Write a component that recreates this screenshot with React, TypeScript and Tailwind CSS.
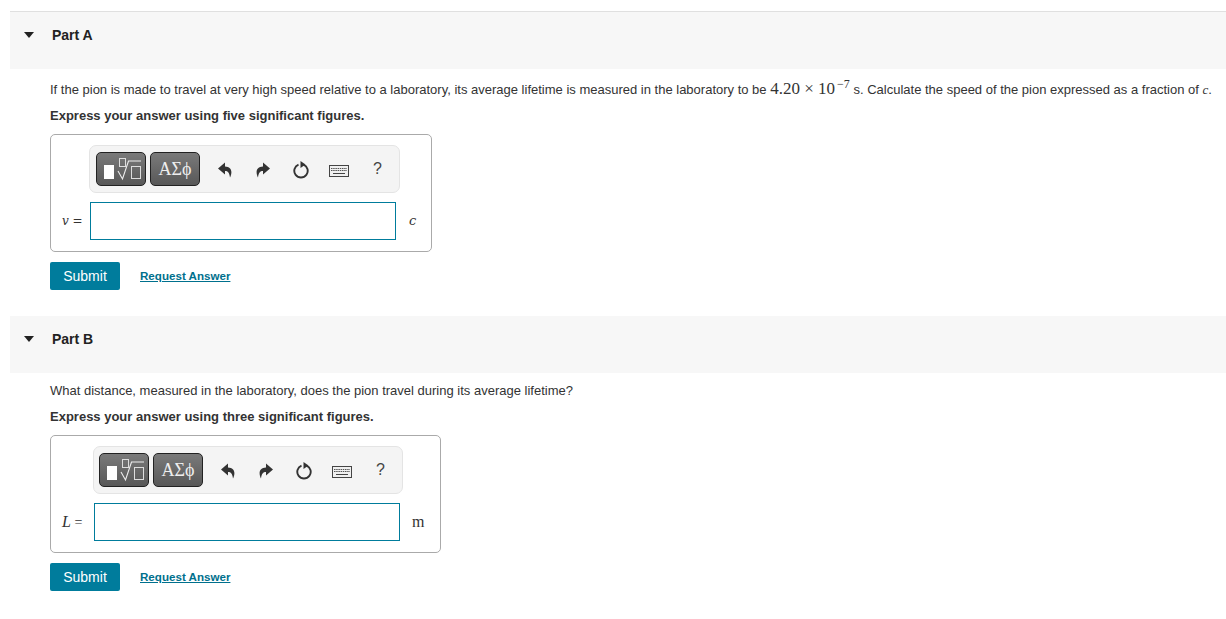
import type { ReactNode } from "react";

const serif = "font-['Liberation_Serif','DejaVu_Serif',serif]";
const btn = "h-[34px] w-[50px] flex items-center justify-center rounded-[5px] border border-[#222] bg-gradient-to-b from-[#7a7a7a] to-[#585858]";

function TemplateIcon() {
    return (
        <svg width="48" height="32" viewBox="0 0 48 32" fill="none">
            <rect x="7" y="12" width="10" height="14" fill="#fff" />
            <rect x="22.500" y="5.500" width="6" height="8" stroke="#ddd" />
            <path d="M21 18l4.500 8L31.500 8H44" stroke="#eee" strokeWidth="1.1" />
            <rect x="34.500" y="13.500" width="9" height="12" stroke="#ddd" />
        </svg>
    );
}

function ToolbarIcons() {
    return (
        <>
            {/* undo */}
            <svg width="14" height="16" viewBox="0 0 14 16" className="ml-[18px] mt-[1px]">
                <path d="M7 0.500L0 6.500 7 12.500V9c3 0 4.300 1.500 5 6.500 2.800-6 1.500-10.500-5-11z" fill="#333" />
            </svg>
            {/* redo */}
            <svg width="14" height="16" viewBox="0 0 14 16" className="ml-[24px] mt-[1px]">
                <path d="M7 0.500l7 6-7 6V9c-3 0-4.300 1.500-5 6.500C-0.800 9.500 0.500 5 7 4.500z" fill="#333" />
            </svg>
            {/* reset */}
            <svg width="16" height="18" viewBox="0 0 16 18" fill="none" className="ml-[23px] mt-[1px]">
                <path d="M10.500 3.600a6.700 6.700 0 1 1-5 0" stroke="#333" strokeWidth="1.900" />
                <path d="M7.500 0l5 3.600-5 3.400z" fill="#333" />
            </svg>
            {/* keyboard */}
            <svg width="20" height="12" viewBox="0 0 20 12" fill="none" className="ml-[20px] mt-[3px]">
                <rect x="0.500" y="0.500" width="19" height="11" fill="#f0f0f0" stroke="#444" />
                <path d="M2 3.500h16M2 5.500h16" stroke="#555" strokeDasharray="1.500 0.700" />
                <path d="M4 8.500h12" stroke="#444" />
            </svg>
            <span className="ml-[24px] text-[16px] leading-none text-[#444]">?</span>
        </>
    );
}

function AnswerBox({ label, unit, boxClass, toolbarClass }: { label: ReactNode; unit: ReactNode; boxClass: string; toolbarClass: string }) {
    return (
        <div className={`${boxClass} h-[118px] border border-[#aaa] rounded-[5px] bg-white pt-[10px]`}>
            <div className={`${toolbarClass} h-[48px] flex items-center bg-[#f4f4f4] border border-[#e4e4e4] rounded-[7px]`}>
                <div className={btn}>
                    <TemplateIcon />
                </div>
                <div className={`${serif} ${btn} ml-[4px] text-[#eee] text-[18px]`}>ΑΣϕ</div>
                <ToolbarIcons />
            </div>
            <div className="flex items-center mt-[9px]">
                {label}
                <div className="w-[306px] h-[38px] border border-[#007c9c] bg-white" />
                {unit}
            </div>
        </div>
    );
}

function Actions() {
    return (
        <div className="flex items-center mt-[10px]">
            <button className="w-[70px] h-[28px] rounded-[2px] bg-[#007c9c] text-white text-[14px]">Submit</button>
            <a className="ml-[20px] text-[11.6px] font-bold text-[#00708d] underline">Request Answer</a>
        </div>
    );
}

function PartHeader({ title }: { title: string }) {
    return (
        <div className="h-[57px] bg-[#f7f7f7] flex items-center pb-[11px] pl-[14px]">
            <div className="w-0 h-0 border-x-[5.500px] border-x-transparent border-t-[6px] border-t-[#222]" />
            <h3 className="ml-[18px] text-[14px] font-bold text-[#222]">{title}</h3>
        </div>
    );
}

export default function App() {
    return (
        <div className="w-[1226px] h-[619px] overflow-hidden bg-white pl-[10px] pt-[11px] text-[#333] font-['Liberation_Sans',sans-serif]">
            <div className="border-t border-[#e0e0e0]">
                {/* Part A */}
                <PartHeader title="Part A" />
                <div className="pl-[40px]">
                    <p className="mt-[10px] h-[20px] text-[13px] leading-[20px] whitespace-nowrap">
                        If the pion is made to travel at very high speed relative to a laboratory, its average lifetime is measured in the laboratory to be{" "}
                        <span className={`${serif} text-[17px]`}>4.20 × 10</span>
                        <sup className={`${serif} text-[12px] ml-[2px]`}>−7</sup> s. Calculate the speed of the pion expressed as a fraction of <i className={serif}>c</i>.
                    </p>
                    <p className="mt-[7px] h-[20px] text-[13px] leading-[20px] font-bold">Express your answer using five significant figures.</p>
                    <div className="mt-[8px]">
                        <AnswerBox
                            boxClass="w-[382px]"
                            toolbarClass="ml-[38px] w-[311px] pl-[6px]"
                            unit={<i className="ml-[13px] text-[13px] text-[#333] font-['DejaVu_Serif',serif]">c</i>}
                            label={<span className="w-[39px] pl-[11px] text-[12px] font-['DejaVu_Serif',serif]"><i>v</i> =</span>}
                        />
                    </div>
                    <Actions />
                </div>

                {/* Part B */}
                <div className="mt-[26px]">
                    <PartHeader title="Part B" />
                </div>
                <div className="pl-[40px]">
                    <p className="mt-[8px] h-[20px] text-[13px] leading-[20px]">What distance, measured in the laboratory, does the pion travel during its average lifetime?</p>
                    <p className="mt-[6px] h-[20px] text-[13px] leading-[20px] font-bold">Express your answer using three significant figures.</p>
                    <div className="mt-[8px]">
                        <AnswerBox
                            boxClass="w-[391px]"
                            toolbarClass="ml-[42px] w-[310px] pl-[5px]"
                            unit={<span className={`${serif} ml-[12px] text-[16px] text-[#333]`}>m</span>}
                            label={<span className={`${serif} w-[43px] pl-[11px] text-[14px]`}><i className="text-[16px]">L</i> =</span>}
                        />
                    </div>
                    <Actions />
                </div>
            </div>
        </div>
    );
}
